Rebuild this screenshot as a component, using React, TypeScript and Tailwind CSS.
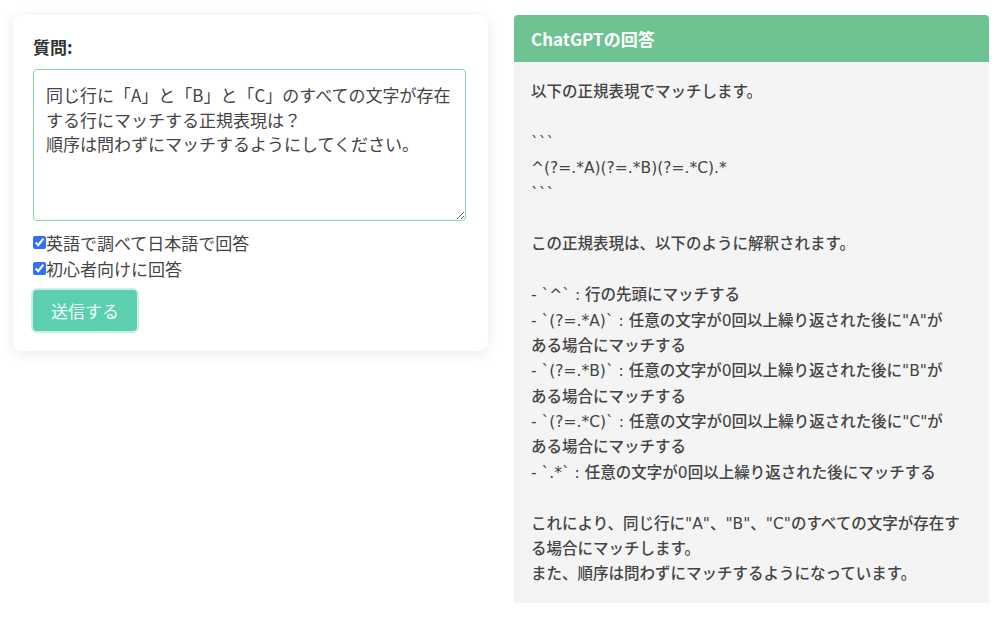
const answerLines = [
  "以下の正規表現でマッチします。",
  "",
  "```",
  "^(?=.*A)(?=.*B)(?=.*C).*",
  "```",
  "",
  "この正規表現は、以下のように解釈されます。",
  "",
  "- `^` : 行の先頭にマッチする",
  '- `(?=.*A)` : 任意の文字が0回以上繰り返された後に"A"が',
  "ある場合にマッチする",
  '- `(?=.*B)` : 任意の文字が0回以上繰り返された後に"B"が',
  "ある場合にマッチする",
  '- `(?=.*C)` : 任意の文字が0回以上繰り返された後に"C"が',
  "ある場合にマッチする",
  "- `.*` : 任意の文字が0回以上繰り返された後にマッチする",
  "",
  'これにより、同じ行に"A"、"B"、"C"のすべての文字が存在す',
  "る場合にマッチします。",
  "また、順序は問わずにマッチするようになっています。",
];

const question =
  "同じ行に「A」と「B」と「C」のすべての文字が存在\nする行にマッチする正規表現は？\n順序は問わずにマッチするようにしてください。";

export default function App() {
  return (
    <div className="min-h-[617px] bg-white font-['Noto_Sans_CJK_JP','Noto_Sans',sans-serif] text-[#444]">
      <div className="flex items-start gap-[26px] pl-[13px] pt-[15px]">
        <div className="w-[475px] rounded-lg bg-white p-5 shadow-[0_2px_14px_rgba(0,0,0,0.09)]">
          <label className="block text-[17px] font-bold leading-6 text-[#333]">質問:</label>
          <textarea
            defaultValue={question}
            wrap="off"
            className="mt-[10px] block h-[152px] w-[433px] resize-y overflow-hidden rounded-[4px] border border-[#86d6a4] bg-white px-3 pt-[13px] text-[17px] leading-[24.5px] text-[#444] outline-none"
          />
          <div className="mt-[9px] flex flex-col text-[17px] leading-[25.5px] text-[#444]">
            <label className="flex items-center">
              <input type="checkbox" defaultChecked className="m-0 size-[13px] accent-[#2f72f0]" />
              <span>英語で調べて日本語で回答</span>
            </label>
            <label className="flex items-center">
              <input type="checkbox" defaultChecked className="m-0 size-[13px] accent-[#2f72f0]" />
              <span>初心者向けに回答</span>
            </label>
          </div>
          <button className="mt-[9px] rounded-[4px] bg-[#5dcfb1] px-[18px] py-2 text-[17px] leading-[25px] text-[#f2fbf8] ring-2 ring-[#c8f0e3]">
            送信する
          </button>
        </div>

        <div className="w-[475px]">
          <div className="flex h-[47px] items-center rounded-t-[4px] bg-[#6dc492] px-[17px] text-[17px] font-bold text-white">
            ChatGPTの回答
          </div>
          <div className="bg-[#f4f4f4] px-[17px] pb-[15px] pt-[18px] font-['DejaVu_Sans','Noto_Sans_CJK_JP',sans-serif] text-[15.5px] font-medium leading-[25.4px] text-[#444]">
            {answerLines.map((line, i) => (
              <div key={i} className="h-[25.4px] whitespace-pre">
                {line}
              </div>
            ))}
          </div>
        </div>
      </div>
    </div>
  );
}
